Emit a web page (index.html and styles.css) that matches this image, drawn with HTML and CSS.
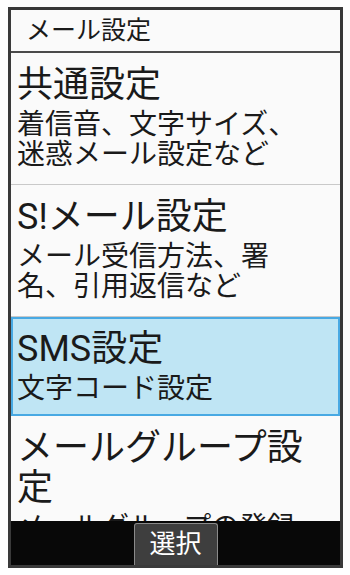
FILE: index.html
```html
<!DOCTYPE html>
<html lang="ja">
<head>
  <meta charset="UTF-8" />
  <title>メール設定</title>
  <link rel="stylesheet" href="styles.css">
</head>
<body>
  <div class="phone">
    <div class="header">メール設定</div>

    <div class="list">
      <div class="item">
        <div class="item-title">共通設定</div>
        <div class="item-sub">着信音、文字サイズ、<br>迷惑メール設定など</div>
      </div>
      <div class="item">
        <div class="item-title">S!メール設定</div>
        <div class="item-sub">メール受信方法、署<br>名、引用返信など</div>
      </div>
      <div class="item selected">
        <div class="item-title">SMS設定</div>
        <div class="item-sub">文字コード設定</div>
      </div>
      <div class="item">
        <div class="item-title">メールグループ設<br>定</div>
        <div class="item-sub">メールグループの登録</div>
      </div>
    </div>

    <div class="softkeys">
      <div class="softkey">選択</div>
    </div>
  </div>
</body>
</html>
```

FILE: styles.css
```css
body {
  margin: 0;
  background-color: #fff;
  font-family: 'Roboto', 'Noto Sans CJK JP', sans-serif;
  color: #1a1a1a;
}
.phone {
  box-sizing: border-box;
  width: 335px;
  height: 561px;
  margin: 7px 0 0 8px;
  border: 3px solid #3a3a3a;
  background-color: #fafafa;
  display: flex;
  flex-direction: column;
  overflow: hidden;
}
.header {
  flex: none;
  height: 41px;
  line-height: 42px;
  padding-left: 15px;
  font-size: 25px;
  border-bottom: 2px solid #4a4a4a;
}
.list {
  flex: 1;
  overflow: hidden;
}
.item {
  padding: 12px 6px 14px;
  border-bottom: 1px solid #c9c9c9;
}
.item-title {
  font-size: 36px;
  line-height: 40px;
  margin-bottom: 5px;
}
.item-sub {
  font-size: 28px;
  line-height: 30px;
}
.selected {
  background-color: #bfe5f4;
  border: 2px solid #48a9e3;
  padding: 10px 4px 10px;
}
.softkeys {
  flex: none;
  height: 44px;
  background-color: #080808;
  display: flex;
  justify-content: center;
  align-items: flex-end;
}
.softkey {
  box-sizing: border-box;
  width: 84px;
  height: 42px;
  background-color: #3e3e3e;
  border: 1px solid #8a8a8a;
  border-bottom: none;
  border-radius: 3px 3px 0 0;
  color: #fff;
  font-size: 26px;
  text-align: center;
  line-height: 40px;
}
```
